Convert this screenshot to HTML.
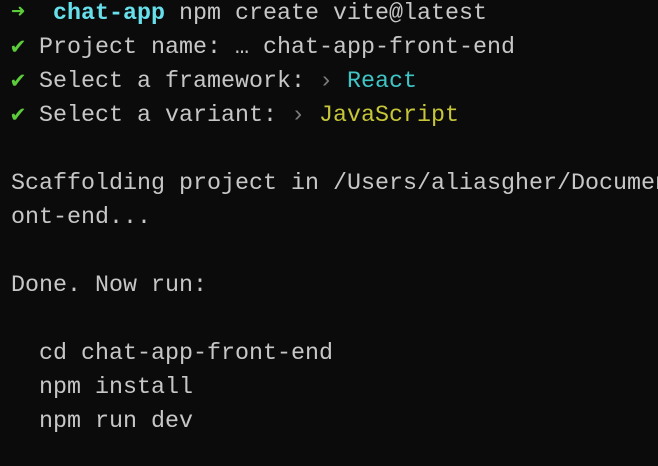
<!DOCTYPE html>
<html><head><style>
html,body{margin:0;padding:0;background:#0b0b0b;width:658px;height:466px;overflow:hidden}
pre{margin:0;position:absolute;left:11px;top:-3px;width:647px;overflow:hidden;font-family:"Liberation Mono","DejaVu Sans Mono",monospace;font-size:23.33px;line-height:34px;color:#c7c7c7;white-space:pre}
.g{color:#5ccc3a}.c{color:#67e0ec;font-weight:bold}.r{color:#3fc5c6}.y{color:#c6c638}.d{color:#7a7a7a}
</style></head><body><pre><span class="g">➜</span>  <span class="c">chat-app</span> npm create vite@latest
<span class="g">✔</span> Project name: … chat-app-front-end
<span class="g">✔</span> Select a framework: <span class="d">›</span> <span class="r">React</span>
<span class="g">✔</span> Select a variant: <span class="d">›</span> <span class="y">JavaScript</span>

Scaffolding project in /Users/aliasgher/Documents
ont-end...

Done. Now run:

  cd chat-app-front-end
  npm install
  npm run dev
</pre></body></html>
